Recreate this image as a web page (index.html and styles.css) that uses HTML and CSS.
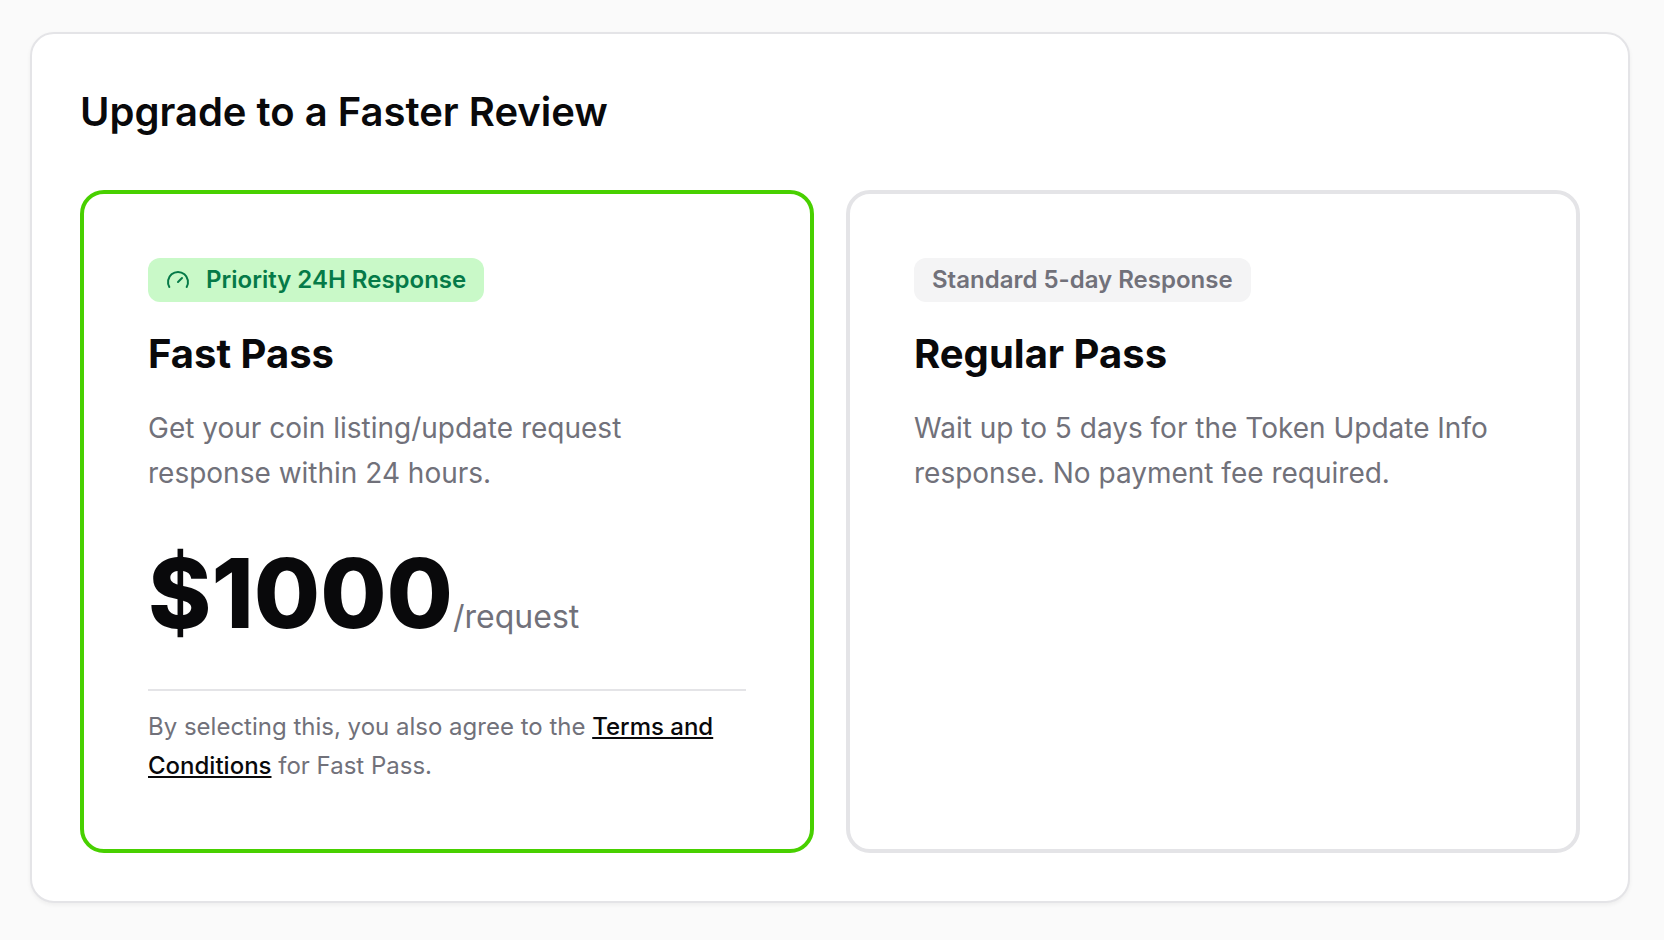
FILE: index.html
```html
<!DOCTYPE html>
<html lang="en">
<head>
    <meta charset="utf-8">
    <title>Upgrade to a Faster Review</title>
    <link rel="stylesheet" href="styles.css">
</head>
<body>
    <main class="panel">
        <h1>Upgrade to a Faster Review</h1>
        <div class="plans">
            <section class="plan selected">
                <div class="badge badge-green">
                    <svg class="badge-icon" viewBox="0 0 24 24" fill="none" stroke="currentColor" stroke-width="2" stroke-linecap="round" stroke-linejoin="round" aria-hidden="true">
                        <path d="m12 14 4-4"/>
                        <path d="M3.34 19a10 10 0 1 1 17.32 0"/>
                    </svg>
                    Priority 24H Response
                </div>
                <h2>Fast Pass</h2>
                <p class="description">Get your coin listing/update request response within 24 hours.</p>
                <div class="price"><strong>$1000</strong><span>/request</span></div>
                <p class="terms">By selecting this, you also agree to the <a href="#">Terms and Conditions</a> for Fast Pass.</p>
            </section>
            <section class="plan">
                <div class="badge">Standard 5-day Response</div>
                <h2>Regular Pass</h2>
                <p class="description">Wait up to 5 days for the Token Update Info response. No payment fee required.</p>
            </section>
        </div>
    </main>
</body>
</html>
```

FILE: styles.css
```css
* {
    box-sizing: border-box;
}
body {
    margin: 0;
    padding: 32px 34px 36px 30px;
    font-family: Inter, "Liberation Sans", sans-serif;
    background-color: #fafafa;
    color: #09090b;
}
h1, h2, p {
    margin: 0;
}
.panel {
    padding: 48px;
    background-color: #fff;
    border: 2px solid #e4e4e7;
    border-radius: 24px;
    box-shadow: 0 2px 4px rgba(0, 0, 0, 0.05);
}
h1 {
    margin-bottom: 48px;
    font-size: 40px;
    line-height: 60px;
    font-weight: 600;
}
.plans {
    display: grid;
    grid-template-columns: 1fr 1fr;
    gap: 32px;
}
.plan {
    padding: 64px;
    border: 4px solid #e4e4e7;
    border-radius: 24px;
}
.plan.selected {
    border-color: #48d000;
}
.badge {
    display: inline-flex;
    align-items: center;
    gap: 16px;
    height: 44px;
    padding: 0 18px;
    border-radius: 12px;
    background-color: #f4f4f5;
    color: #71717a;
    font-size: 24px;
    line-height: 32px;
    font-weight: 600;
}
.badge-green {
    background-color: #c9f9c8;
    color: #057a48;
}
.badge-icon {
    width: 24px;
    height: 24px;
}
h2 {
    margin-top: 24px;
    font-size: 40px;
    line-height: 56px;
    font-weight: 700;
}
.description {
    margin-top: 24px;
    color: #71717a;
    font-size: 28px;
    line-height: 45px;
}
.price {
    display: flex;
    align-items: baseline;
    margin-top: 49px;
}
.price strong {
    font-size: 96px;
    line-height: 96px;
    font-weight: 800;
}
.price span {
    color: #71717a;
    font-size: 32px;
    line-height: 48px;
}
.terms {
    margin-top: 48px;
    padding-top: 16px;
    border-top: 2px solid #e4e4e7;
    color: #71717a;
    font-size: 24px;
    line-height: 39px;
}
.terms a {
    color: #09090b;
    font-weight: 500;
}
```
